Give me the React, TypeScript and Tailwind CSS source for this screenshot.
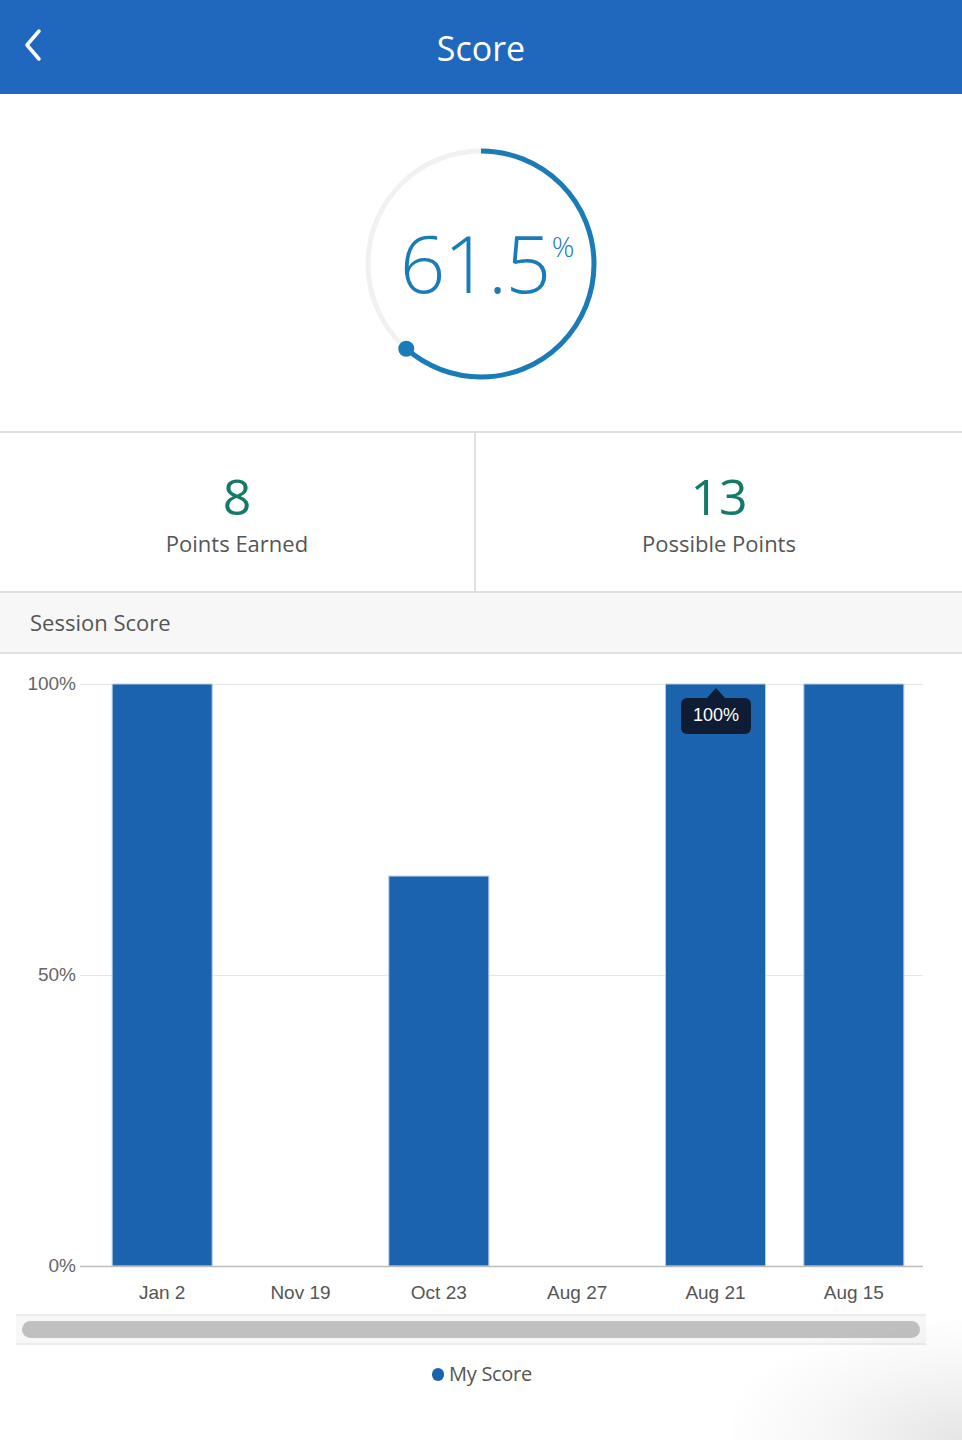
import React from 'react';

type Session = { label: string; value: number };

const SESSIONS: Session[] = [
  { label: 'Jan 2', value: 100 },
  { label: 'Nov 19', value: 0 },
  { label: 'Oct 23', value: 67 },
  { label: 'Aug 27', value: 0 },
  { label: 'Aug 21', value: 100 },
  { label: 'Aug 15', value: 100 },
];

const SCORE = 61.5;

// chart geometry (relative to the svg)
const PLOT_LEFT = 93;
const PLOT_RIGHT = 923;
const TOP = 30;
const BOTTOM = 612;
const BAR_W = 100;

function Gauge() {
  const r = 113;
  const c = 2 * Math.PI * r;
  const angle = (SCORE / 100) * 2 * Math.PI;
  const dotX = 120 + r * Math.sin(angle);
  const dotY = 120 - r * Math.cos(angle);
  return (
    <div className="relative w-[240px] h-[240px]">
      <svg width="240" height="240" viewBox="0 0 240 240">
        <circle cx="120" cy="120" r={r} fill="none" stroke="#f1f1f1" strokeWidth="5" />
        <circle
          cx="120"
          cy="120"
          r={r}
          fill="none"
          stroke="#1a7bb9"
          strokeWidth="5"
          strokeDasharray={`${(SCORE / 100) * c} ${c}`}
          transform="rotate(-90 120 120)"
        />
        <circle cx={dotX} cy={dotY} r="8" fill="#1a7bb9" />
      </svg>
      <div className="absolute inset-0 flex items-center justify-center pl-[12px] pb-[4px]">
        <span className="text-[80px] leading-none font-light text-[#1a7bb9] tracking-[-1.5px]">61.5</span>
        <span className="text-[28px] leading-none font-light text-[#1a7bb9] self-start mt-[88px] ml-[2px]">%</span>
      </div>
    </div>
  );
}

function Stat({ value, label, className }: { value: string; label: string; className: string }) {
  return (
    <div className={`flex flex-col items-center justify-center ${className}`}>
      <div className="text-[50px] leading-none font-medium text-[#137a6a]">{value}</div>
      <div className="text-[22px] leading-none text-[#555] mt-[11px]">{label}</div>
    </div>
  );
}

function SessionChart() {
  const cat = (PLOT_RIGHT - PLOT_LEFT) / SESSIONS.length;
  const yFor = (v: number) => BOTTOM - ((BOTTOM - TOP) * v) / 100;
  return (
    <svg width="962" height="660" viewBox="0 0 962 660" className="block" style={{ fontFamily: '"Liberation Sans", Arial, sans-serif' }}>
      {[100, 50].map((v) => (
        <line key={v} x1="80" x2="923" y1={yFor(v) + 0.5} y2={yFor(v) + 0.5} stroke="#e6e6e6" strokeWidth="1" />
      ))}
      {[100, 50, 0].map((v) => (
        <text key={v} x="76" y={yFor(v) + 6} textAnchor="end" fontSize="19" fill="#666">
          {v}%
        </text>
      ))}
      {SESSIONS.map((s, i) => {
        const cx = PLOT_LEFT + cat * i + cat / 2;
        const y = yFor(s.value);
        return (
          <g key={s.label}>
            {s.value > 0 && (
              <rect
                x={cx - BAR_W / 2}
                y={y}
                width={BAR_W}
                height={BOTTOM - y}
                fill="#1c63ae"
                stroke="#b8cde6"
                strokeWidth="1"
              />
            )}
            <text x={cx} y="645" textAnchor="middle" fontSize="19" fill="#555">
              {s.label}
            </text>
          </g>
        );
      })}
      <line x1="80" x2="923" y1={BOTTOM + 0.5} y2={BOTTOM + 0.5} stroke="#bdbdbd" strokeWidth="1.5" />
      {/* tooltip on Aug 21 */}
      <g>
        <path d="M707 44 L716 34 L725 44 Z" fill="#0e1d33" />
        <rect x="681" y="44" width="70" height="36" rx="6" fill="#0e1d33" />
        <text x="716" y="67" textAnchor="middle" fontSize="18" fill="#ffffff">
          100%
        </text>
      </g>
    </svg>
  );
}

export default function App() {
  return (
    <div className="relative min-h-[1440px] bg-white overflow-hidden" style={{ fontFamily: '"Open Sans", "Noto Sans", sans-serif' }}>
      {/* Header */}
      <div className="h-[94px] bg-[#1f68bd] flex items-center relative">
        <div className="absolute left-[22px] top-[27px]">
          <svg width="24" height="36" viewBox="0 0 24 36" fill="none">
            <path d="M17 4 L5 18 L17 32" stroke="#fff" strokeWidth="3.5" strokeLinecap="round" strokeLinejoin="round" />
          </svg>
        </div>
        <div className="flex-1 text-center text-white text-[34px] font-medium leading-none pt-[2px]">Score</div>
      </div>

      {/* Gauge */}
      <div className="h-[337px] flex items-center justify-center pt-[2px]">
        <Gauge />
      </div>

      {/* Stats */}
      <div className="flex h-[160px] border-t-2 border-[#e0e0e0]">
        <Stat className="w-[474px]" value="8" label="Points Earned" />
        <div className="w-[2px] bg-[#e0e0e0]" />
        <Stat className="flex-1" value="13" label="Possible Points" />
      </div>

      {/* Session header */}
      <div className="h-[63px] bg-[#f7f7f7] border-y-2 border-[#e0e0e0] flex items-center px-[30px]">
        <span className="text-[22px] text-[#555]">Session Score</span>
      </div>

      <SessionChart />

      {/* scrollbar */}
      <div className="mx-[16px] w-[910px] h-[31px] bg-[#f7f7f7] border-y-2 border-[#ececec] flex items-center px-[6px]">
        <div className="h-[17px] w-full rounded-full bg-[#c0c0c0]" />
      </div>

      {/* legend */}
      <div className="flex items-center justify-center gap-[5px] mt-[19px] pl-[2px]">
        <span className="w-[12px] h-[13px] rounded-full bg-[#1c63ae]" />
        <span className="text-[20px] text-[#555] leading-none tracking-[-0.3px]">My Score</span>
      </div>

      <div className="pointer-events-none absolute right-0 bottom-0 w-[230px] h-[120px] bg-[radial-gradient(ellipse_at_bottom_right,rgba(0,0,0,0.1),rgba(0,0,0,0.03)_45%,rgba(255,255,255,0)_75%)]" />
    </div>
  );
}
